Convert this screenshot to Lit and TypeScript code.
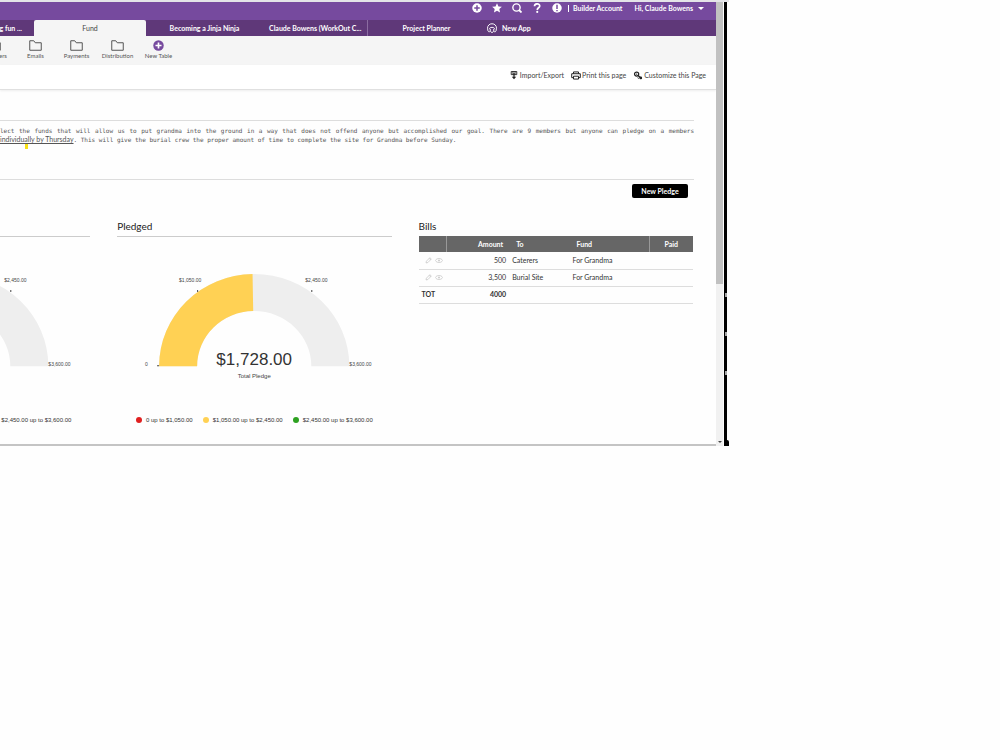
import { LitElement, html, css, svg } from "lit";
import { customElement, property } from "lit/decorators.js";

const plus = html`<svg viewBox="0 0 20 20" aria-hidden="true"><circle cx="10" cy="10" r="9.5" fill="currentColor"/><path class="cut" d="M10 4.5v11M4.5 10h11" fill="none" stroke-width="3"/></svg>`;
const folder = html`<svg viewBox="0 0 26 22" aria-hidden="true"><path d="M1.5 20.5v-19h8l3 4h12v15z" fill="none" stroke="#555" stroke-width="2"/></svg>`;
const star = html`<svg viewBox="0 0 20 20" aria-hidden="true"><path d="M10 .5l2.9 6.3 6.8.7-5.1 4.7 1.5 7L10 15.6l-6.1 3.6 1.5-7L.3 7.5l6.8-.7z" fill="currentColor"/></svg>`;
const search = html`<svg viewBox="0 0 20 20" aria-hidden="true"><circle cx="9" cy="9" r="7.3" fill="none" stroke="currentColor" stroke-width="2.8"/><path d="M14 14l5 5" stroke="currentColor" stroke-width="3.6"/></svg>`;
const help = html`<svg viewBox="0 0 20 20" aria-hidden="true"><path d="M5 6.5C5 0 15.5.3 15.5 6c0 3.6-5 3.6-5 7.8" fill="none" stroke="currentColor" stroke-width="3.4"/><circle cx="10.5" cy="17.8" r="2.1" fill="currentColor"/></svg>`;
const alertIcon = html`<svg viewBox="0 0 20 20" aria-hidden="true"><circle cx="10" cy="10" r="9.5" fill="currentColor"/><path class="cut" d="M10 3.5v8.5M10 13.8v2.7" stroke-width="3" fill="none"/></svg>`;
const appIcon = html`<svg viewBox="0 0 20 20" aria-hidden="true"><path d="M5.5 17.5H3.5C1.5 16 1 13 1 10.500 1 5 5 1.500 10 1.500s9 3.500 9 9c0 2.500-.5 5.500-2.500 7h-2M6.500 18v-6M13.500 18v-6M4 12.500C5.500 7.500 14.500 7.500 16 12.500M8 18.500h4" fill="none" stroke="currentColor" stroke-width="1.9"/></svg>`;
const exportIcon = html`<svg viewBox="0 0 20 26" aria-hidden="true"><path d="M2 1.500h16v9H2zM7 2v8M13 2v8" fill="none" stroke="#222" stroke-width="2.600"/><path d="M10 6v13" stroke="#222" stroke-width="3.600"/><path d="M3.500 16.500h13L10 24z" fill="#222"/></svg>`;
const printer = html`<svg viewBox="0 0 28 24" aria-hidden="true"><path d="M7 7V2h14v5M7 18H2V7h24v11h-5M7 14h14v8H7z" fill="none" stroke="#222" stroke-width="2.800"/></svg>`;
const wrench = html`<svg viewBox="0 0 26 26" aria-hidden="true"><circle cx="9" cy="9" r="6" fill="none" stroke="#222" stroke-width="3.600"/><circle cx="9" cy="9" r="1.800" fill="#222"/><path d="M13 13l10 9" stroke="#222" stroke-width="4"/><circle cx="21" cy="20" r="4" fill="#222"/><path d="M12 18l3 5" stroke="#222" stroke-width="2"/></svg>`;
const pencil = html`<svg viewBox="0 0 20 20" aria-hidden="true"><path d="M3 17l1-5L14 2l4 4L8 16z M12 4l4 4" fill="none" stroke="#bbb" stroke-width="1.800"/></svg>`;
const eye = html`<svg viewBox="0 0 24 20" aria-hidden="true"><path d="M1 10C5 2 19 2 23 10 19 18 5 18 1 10z" fill="none" stroke="#bbb" stroke-width="1.800"/><circle cx="12" cy="10" r="3" fill="#ccc"/></svg>`;

interface GaugeRange { color: string; label: string; }
const ranges: GaugeRange[] = [
  { color: "#e02020", label: "0 up to $1,050.00" },
  { color: "#ffd154", label: "$1,050.00 up to $2,450.00" },
  { color: "#2ea121", label: "$2,450.00 up to $3,600.00" },
];

@customElement("fund-gauge")
class FundGauge extends LitElement {
  @property({ type: Number }) value = 0;
  @property({ type: Number }) max = 3600;
  @property() amount = "";
  @property() caption = "";

  static styles = css`
    :host { display: block; font-family: "Liberation Sans", Arial, sans-serif; color: #333; }
    .dial { display: block; width: 100%; overflow: visible; }
    .tick { font-size: 5px; fill: #444; }
    .amount { font-size: 17px; fill: #333; }
    .caption { font-size: 6px; fill: #444; }
    .legend { display: flex; justify-content: center; gap: 10px; margin: 35px 0 0; padding: 0; list-style: none; font-size: 6px; line-height: 8px; white-space: nowrap; }
    .legend li { display: flex; align-items: center; gap: 4px; }
    .dot { width: 6px; height: 6px; border-radius: 50%; }
  `;

  private arc(from: number, to: number) {
    const at = (t: number, rx: number, ry: number) =>
      `${137 - rx * Math.cos(Math.PI * t)} ${111 - ry * Math.sin(Math.PI * t)}`;
    return `M${at(from, 95, 92)}A95 92 0 0 1 ${at(to, 95, 92)}L${at(to, 57, 55)}A57 55 0 0 0 ${at(from, 57, 55)}Z`;
  }

  render() {
    const share = this.value / this.max;
    return html`
      <svg class="dial" viewBox="0 0 274 126" role="img" aria-label="${this.caption} ${this.amount}">
        <path d=${this.arc(0, 1)} fill="#eee"></path>
        ${share > 0 ? svg`<path d=${this.arc(0, share)} fill="#ffd154"></path>` : ""}
        <path d="M40 110.500h2M80.500 35v2M194.500 35v2" stroke="#444" fill="none"></path>
        <text class="tick" x="28" y="111">0</text>
        <text class="tick" x="62" y="27">$1,050.00</text>
        <text class="tick" x="188" y="27">$2,450.00</text>
        <text class="tick" x="232" y="111">$3,600.00</text>
        <text class="amount" x="137" y="110" text-anchor="middle">${this.amount}</text>
        <text class="caption" x="137" y="123" text-anchor="middle">${this.caption}</text>
      </svg>
      <ul class="legend">
        ${ranges.map((r) => html`<li><span class="dot" style="background:${r.color}"></span>${r.label}</li>`)}
      </ul>`;
  }
}

@customElement("app-root")
class AppRoot extends LitElement {
  static styles = css`
    :host { display: block; min-height: 100vh; background: #fefefe; color: #333; font-family: Lato, "Open Sans", sans-serif; font-size: 7px; line-height: 9px; }
    * { box-sizing: border-box; }
    button, a { font: inherit; color: inherit; background: none; border: 0; padding: 0; margin: 0; text-decoration: none; white-space: nowrap; }
    svg { display: block; flex: none; }
    .window { display: flex; width: 72.9%; border-top: 2px solid #e4e4e8; }
    .page { flex: 1; min-width: 0; overflow: hidden; background: #fefefe; border-bottom: 2px solid #c4c4c4; padding-bottom: 20px; }
    .account { display: flex; align-items: flex-start; justify-content: flex-end; height: 18px; padding: 1px 12px 0 0; background: #764a9e; color: #fff; font-weight: 700; line-height: 11px; }
    .tools { display: flex; gap: 10px; }
    .tools svg { width: 10px; height: 10px; }
    .cut { stroke: #764a9e; }
    .sep { width: 1px; height: 7px; margin: 2px 4px 0 6px; background: #fff; }
    .user { display: flex; align-items: center; gap: 5px; margin-left: 12px; }
    .caret { border: 3px solid transparent; border-top-color: #fff; border-bottom: 0; }
    .apps { display: flex; height: 16px; margin-left: -77px; padding-right: 20px; background: #5f3879; color: #fff; font-weight: 700; }
    .app { flex: none; width: 111px; padding: 0 6px 0 12px; text-align: center; line-height: 16px; }
    .app.first { padding-right: 12px; text-align: right; }
    .divided { border-right: 1px solid #8b6ca1; }
    .app.active { padding: 0; width: 112px; background: #f5f5f5; color: #444; font-weight: 400; border-radius: 2px 2px 0 0; }
    .new-app { display: flex; align-items: center; gap: 5px; margin-left: 8px; }
    .new-app svg { width: 10px; height: 10px; }
    .tables { display: flex; height: 29px; padding-top: 4px; margin-left: -26px; background: #f5f5f5; font-size: 6px; }
    .table-link { display: flex; flex: none; flex-direction: column; align-items: center; width: 41px; color: #555; }
    .table-link svg { width: 13px; height: 11px; }
    .table-link .round svg { width: 11px; color: #764a9e; }
    .round .cut { stroke: #fff; }
    .actions { display: flex; justify-content: flex-end; align-items: center; gap: 7px; height: 25px; padding: 0 10px 3px 0; background: #fff; border-bottom: 1px solid #e0e0e0; box-shadow: 0 1px 2px #0001; color: #444; }
    .action { display: flex; align-items: center; gap: 1px; }
    .action svg { width: 10px; height: 9px; }
    .intro { margin: 30px 22px 0 0; padding: 5px 0 30px; border: solid #ddd; border-width: 1px 0; font-family: "DejaVu Sans Mono", monospace; font-size: 6px; color: #555; }
    .intro p { margin: 0; white-space: nowrap; }
    .intro .spread { white-space: normal; text-align: justify; text-align-last: justify; }
    .intro u { font-family: Lato, sans-serif; font-size: 7px; }
    .mark { width: 3px; height: 5px; margin-left: 25px; background: #f7e018; }
    .pledge-row { display: flex; justify-content: flex-end; padding: 4px 28px 0 0; }
    .pledge { height: 14px; width: 56px; border-radius: 2px; background: #000; color: #fff; font-weight: 700; }
    .columns { display: flex; justify-content: flex-end; gap: 27px; margin-top: 22px; padding-right: 23px; }
    .column { flex: none; width: 39.6%; }
    h2 { margin: 0; padding-bottom: 4px; font-size: 10px; line-height: 12px; font-weight: 400; color: #222; border-bottom: 1px solid #ccc; }
    fund-gauge { padding-top: 18px; }
    table { width: 100%; border-collapse: collapse; table-layout: fixed; }
    .plain { border-bottom: 0; }
    th { height: 16px; padding: 0 3px; background: #666; color: #fff; text-align: left; }
    td { height: 17px; padding: 0 3px; border-bottom: 1px solid #ddd; }
    .split { border-right: 1px solid #999; }
    th.amount { padding-right: 6px; }
    th.lead { padding-left: 7px; }
    .amount { text-align: right; }
    .center { text-align: center; }
    .total td { font-weight: 700; }
    .c-tools { width: 10%; }
    .c-amount { width: 23%; }
    .c-to { width: 22%; }
    .c-paid { width: 16%; }
    .row-tools { display: flex; justify-content: flex-end; gap: 3px; }
    .row-tools svg { width: 7px; height: 7px; }
    .row-tools .see svg { width: 8px; }
    .scroll { width: 7px; margin-right: 1px; background: #f1f1f1; display: flex; flex-direction: column; justify-content: space-between; align-items: center; }
    .thumb { width: 100%; height: 63.5%; background: #c1c1c1; }
    .down { border: 2px solid transparent; border-top-color: #444; border-bottom: 0; margin-bottom: 3px; }
    .edge { width: 5px; display: flex; flex-direction: column; align-items: flex-end; }
    .bar { flex: 1; width: 3px; margin-right: 2px; background: #000; display: flex; flex-direction: column; justify-content: flex-end; gap: 35px; padding-bottom: 65px; align-items: flex-end; }
    .speck { width: 2px; height: 4px; background: #aaa; }
    .corner { width: 5px; height: 6px; background: #000; border-radius: 0 2px 0 0; }
  `;

  render() {
    const apps = ["Becoming a Jinja Ninja", "Claude Bowens (WorkOut C...", "Project Planner"];
    const tables = ["Members", "Emails", "Payments", "Distribution"];
    const bills = [["500", "Caterers"], ["3,500", "Burial Site"]];
    return html`
      <div class="window">
        <main class="page">
          <header class="account">
            <div class="tools">
              <button aria-label="Add">${plus}</button>
              <button aria-label="Favorites">${star}</button>
              <button aria-label="Search">${search}</button>
              <button aria-label="Help">${help}</button>
              <button aria-label="Alerts">${alertIcon}</button>
            </div>
            <span class="sep"></span>
            <a href="#">Builder Account</a>
            <button class="user">Hi, Claude Bowens <span class="caret"></span></button>
          </header>
          <nav class="apps">
            <a class="app first" href="#">Saving fun ...</a>
            <a class="app active" href="#">Fund</a>
            ${apps.map((a, i) => html`<a class="app ${i === 1 ? "divided" : ""}" href="#">${a}</a>`)}
            <button class="new-app">${appIcon}New App</button>
          </nav>
          <nav class="tables">
            ${tables.map((t) => html`<a class="table-link" href="#">${folder}<span>${t}</span></a>`)}
            <button class="table-link"><span class="round">${plus}</span><span>New Table</span></button>
          </nav>
          <div class="actions">
            <button class="action">${exportIcon}Import/Export</button>
            <button class="action">${printer}Print this page</button>
            <button class="action">${wrench}Customize this Page</button>
          </div>
          <section class="intro">
            <p class="spread">lect the funds that will allow us to put grandma into the ground in a way that does not offend anyone but accomplished our goal. There are 9 members but anyone can pledge on a members</p>
            <p><u>individually by Thursday</u>. This will give the burial crew the proper amount of time to complete the site for Grandma before Sunday.</p>
            <div class="mark"></div>
          </section>
          <div class="pledge-row"><button class="pledge">New Pledge</button></div>
          <div class="columns">
            <section class="column">
              <h2>Collected</h2>
              <fund-gauge .value=${0} amount="$0.00" caption="Total Collected"></fund-gauge>
            </section>
            <section class="column">
              <h2>Pledged</h2>
              <fund-gauge .value=${1780} amount="$1,728.00" caption="Total Pledge"></fund-gauge>
            </section>
            <section class="column">
              <h2 class="plain">Bills</h2>
              <table>
                <colgroup><col class="c-tools"><col class="c-amount"><col class="c-to"><col><col class="c-paid"></colgroup>
                <thead><tr><th class="split"></th><th class="amount">Amount</th><th class="lead">To</th><th class="lead split">Fund</th><th class="center">Paid</th></tr></thead>
                <tbody>
                  ${bills.map(([amount, to]) => html`<tr>
                    <td><div class="row-tools"><button aria-label="Edit">${pencil}</button><button class="see" aria-label="View">${eye}</button></div></td>
                    <td class="amount">${amount}</td><td>${to}</td><td>For Grandma</td><td></td>
                  </tr>`)}
                  <tr class="total"><td>TOT</td><td class="amount">4000</td><td></td><td></td><td></td></tr>
                </tbody>
              </table>
            </section>
          </div>
        </main>
        <div class="scroll"><div class="thumb"></div><div class="down"></div></div>
        <div class="edge">
          <div class="bar"><i class="speck"></i><i class="speck"></i><i class="speck"></i></div>
          <div class="corner"></div>
        </div>
      </div>`;
  }
}
